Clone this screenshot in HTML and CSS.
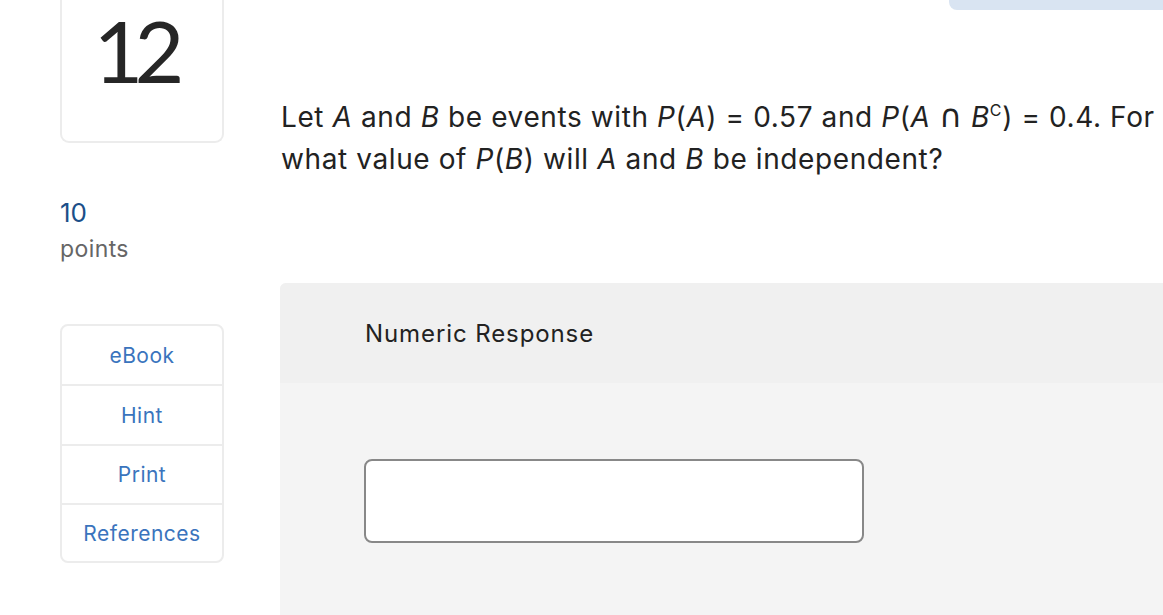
FILE: index.html
```html
<!DOCTYPE html>
<html>
<head>
<meta charset="utf-8">
<link rel="stylesheet" href="styles.css">
</head>
<body>
<div class="topbar"></div>
<div class="page">
  <aside class="side">
    <div class="qnum">12</div>
    <div class="points">
      <div class="pval">10</div>
      <div class="plabel">points</div>
    </div>
    <ul class="tools">
      <li class="t1"><a>eBook</a></li>
      <li class="t2"><a>Hint</a></li>
      <li class="t3"><a>Print</a></li>
      <li class="t4"><a>References</a></li>
    </ul>
  </aside>
  <main class="main">
    <p class="question">Let <i>A</i> and <i>B</i> be events with <i>P</i>(<i>A</i>) = 0.57 and <i>P</i>(<i>A</i> <span class="cap">∩</span> <i>B</i><sup>C</sup>) = 0.4. For what value of <i>P</i>(<i>B</i>) will <i>A</i> and <i>B</i> be independent?</p>
    <section class="panel">
      <div class="panel-head">Numeric Response</div>
      <div class="panel-body">
        <div class="answer"></div>
      </div>
    </section>
  </main>
</div>
</body>
</html>
```

FILE: styles.css
```css
html, body {
  margin: 0;
  padding: 0;
  background: #fff;
  overflow: hidden;
  height: 615px;
}
body {
  font-family: Inter, "Open Sans", sans-serif;
  color: #222;
  position: relative;
}
.topbar {
  position: absolute;
  top: 0;
  left: 949px;
  right: 0;
  height: 10px;
  background: #d9e4f2;
  border-bottom-left-radius: 8px;
}
.page {
  display: flex;
  padding-left: 60px;
}
.side {
  width: 164px;
  flex: none;
}
.qnum {
  box-sizing: border-box;
  height: 143px;
  border: 2px solid #ececec;
  border-top: none;
  border-radius: 0 0 9px 9px;
  text-align: center;
  font-family: Lato, sans-serif;
  font-size: 86px;
  line-height: 100px;
  color: #262626;
  letter-spacing: -9px;
  text-indent: -15px;
}
.points {
  margin-top: 54px;
}
.pval {
  font-size: 26px;
  color: #1b4f89;
  line-height: 32px;
}
.plabel {
  font-size: 23px;
  letter-spacing: 0.4px;
  color: #666;
  line-height: 40px;
}
.tools {
  list-style: none;
  margin: 55px 0 0;
  padding: 0;
  border: 2px solid #ececec;
  border-radius: 8px;
}
.tools li {
  display: flex;
  align-items: center;
  justify-content: center;
  font-size: 21px;
  letter-spacing: 0.5px;
  color: #3a74bd;
  border-top: 2px solid #ececec;
}
.tools li:first-child { border-top: none; }
.t1 { height: 58px; }
.t2 { height: 58px; }
.t3 { height: 57px; }
.t4 { height: 56px; }
.main {
  flex: 1;
  margin-left: 56px;
  min-width: 0;
}
.question {
  margin: 96px 0 0 1px;
  font-size: 28px;
  line-height: 42px;
  color: #222;
  letter-spacing: 0.6px;
}
.question i {
  font-style: italic;
}
.question .cap {
  font-family: "DejaVu Sans", sans-serif;
  font-size: 32px;
  line-height: 0;
  letter-spacing: 0;
}
.question sup {
  font-size: 16px;
  line-height: 0;
  vertical-align: 11px;
}
.panel {
  margin-top: 103px;
  background: #f4f4f4;
  border-top-left-radius: 6px;
  overflow: hidden;
  height: 340px;
}
.panel-head {
  background: #f0f0f0;
  height: 100px;
  display: flex;
  align-items: center;
  padding-left: 85px;
  font-size: 24px;
  letter-spacing: 0.9px;
  color: #222;
}
.panel-body {
  padding: 76px 0 0 84px;
}
.answer {
  box-sizing: border-box;
  width: 500px;
  height: 84px;
  background: #fff;
  border: 2px solid #888;
  border-radius: 8px;
}
```
